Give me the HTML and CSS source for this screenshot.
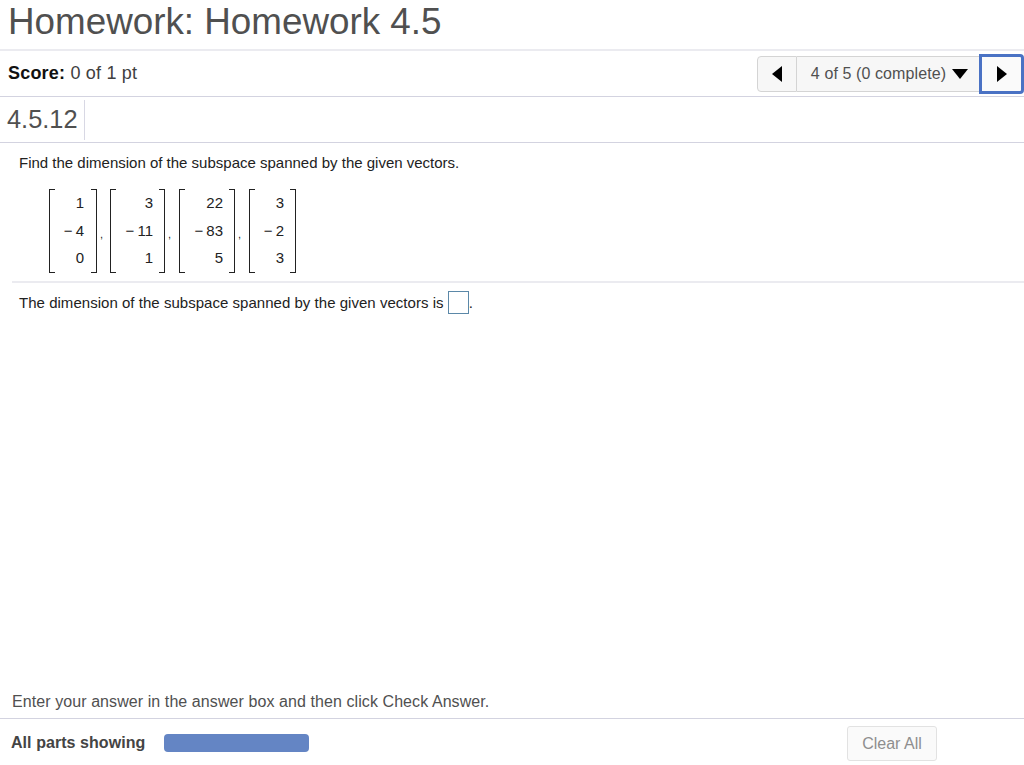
FILE: index.html
```html
<!DOCTYPE html>
<html lang="en">
<head>
    <meta charset="UTF-8">
    <meta name="viewport" content="width=device-width, initial-scale=1.0">
    <title>Homework: Homework 4.5</title>
    <link rel="stylesheet" href="styles.css">
</head>
<body>
    <div class="page">
        <h1 class="title">Homework: Homework 4.5</h1>

        <div class="score-bar">
            <div class="score"><b>Score:</b> 0 of 1 pt</div>
            <div class="nav">
                <button class="nav-prev"><span class="arrow-left"></span></button>
                <button class="nav-select">4 of 5 (0 complete)<span class="arrow-down"></span></button>
                <button class="nav-next"><span class="arrow-right"></span></button>
            </div>
        </div>

        <div class="question-bar">
            <div class="question-number">4.5.12</div>
        </div>

        <div class="question">
            <p class="prompt">Find the dimension of the subspace spanned by the given vectors.</p>
            <div class="vectors">
                <div class="vector v1"><span>1</span><span>&minus; 4</span><span>0</span></div>
                <span class="comma">,</span>
                <div class="vector v2"><span>3</span><span>&minus; 11</span><span>1</span></div>
                <span class="comma">,</span>
                <div class="vector v3"><span>22</span><span>&minus; 83</span><span>5</span></div>
                <span class="comma">,</span>
                <div class="vector v4"><span>3</span><span>&minus; 2</span><span>3</span></div>
            </div>
            <div class="answer-row">
                <p class="answer">The dimension of the subspace spanned by the given vectors is <span class="answer-box"></span>.</p>
            </div>
        </div>

        <div class="instructions">Enter your answer in the answer box and then click Check Answer.</div>

        <div class="footer">
            <b class="parts-label">All parts showing</b>
            <div class="progress"></div>
            <button class="clear-all">Clear All</button>
        </div>
    </div>
</body>
</html>
```

FILE: styles.css
```css
body {
    margin: 0;
    font-family: "Liberation Sans", Arial, sans-serif;
    background-color: #fff;
}

.page {
    display: flex;
    flex-direction: column;
    height: 765px;
    overflow: hidden;
}

.title {
    margin: 0;
    padding-left: 8px;
    height: 49px;
    line-height: 43px;
    font-size: 36.8px;
    font-weight: normal;
    color: #505050;
    border-bottom: 2px solid #ebebf0;
}

.score-bar {
    display: flex;
    justify-content: space-between;
    align-items: center;
    height: 45px;
    padding-left: 8px;
    border-bottom: 1px solid #d3d3e0;
}

.score {
    font-size: 18px;
    letter-spacing: 0.2px;
    color: #404040;
}

.score b {
    color: #111;
}

.nav {
    display: flex;
    align-items: center;
}

.nav button {
    display: flex;
    align-items: center;
    justify-content: center;
    height: 36px;
    padding: 0;
    background-color: #f7f7f7;
    border: 1px solid #d4d4d4;
    font-family: inherit;
}

.nav-prev {
    width: 40px;
    border-radius: 4px 0 0 4px;
}

.nav .nav-select {
    width: 182px;
    padding-left: 3px;
    border-left: none;
    border-right: none;
    font-size: 16px;
    letter-spacing: 0.1px;
    color: #505050;
}

.nav .nav-next {
    width: 45px;
    height: 40px;
    background-color: #fafafa;
    border: 3px solid #4a72c4;
    border-radius: 0 4px 4px 0;
}

.arrow-left {
    border-top: 8px solid transparent;
    border-bottom: 8px solid transparent;
    border-right: 10px solid #000;
}

.arrow-right {
    border-top: 8px solid transparent;
    border-bottom: 8px solid transparent;
    border-left: 10px solid #000;
}

.arrow-down {
    margin-left: 6px;
    border-left: 8px solid transparent;
    border-right: 8px solid transparent;
    border-top: 10px solid #000;
}

.question-bar {
    display: flex;
    align-items: center;
    height: 45px;
    border-bottom: 1px solid #d3d3e0;
}

.question-number {
    height: 40px;
    width: 77px;
    padding-left: 7px;
    line-height: 38px;
    font-size: 25.4px;
    color: #505050;
    border-right: 1px solid #d8d8e4;
}

.question {
    flex: 1;
    padding: 0 0 0 12px;
    font-size: 15px;
    color: #222;
}

.prompt {
    margin: 11px 0 0 7px;
    line-height: 18px;
}

.vectors {
    display: flex;
    align-items: center;
    margin: 17px 0 0 37px;
    height: 84px;
}

.vector {
    display: flex;
    flex-direction: column;
    box-sizing: border-box;
    height: 84px;
    padding: 0 12px 0 0;
    text-align: right;
    line-height: 27.5px;
    word-spacing: -1px;
    position: relative;
}

.vector::before,
.vector::after {
    content: "";
    position: absolute;
    top: 0;
    bottom: 0;
    width: 5px;
    border: 1px solid #222;
}

.vector::before {
    left: 0;
    border-right: none;
}

.vector::after {
    right: 0;
    border-left: none;
}

.v1 {
    width: 48px;
    padding-right: 13px;
}

.v2 {
    width: 55px;
}

.v3 {
    width: 56px;
}

.v4 {
    width: 47px;
}

.comma {
    box-sizing: border-box;
    width: 13px;
    padding: 6px 0 0 3px;
    font-size: 11px;
}

.comma + .vector + .comma,
.comma + .vector + .comma + .vector + .comma {
    width: 14px;
}

.answer-row {
    margin-top: 8px;
    padding: 7px 0 0 7px;
    border-top: 2px solid #ebebf0;
}

.answer {
    display: flex;
    align-items: center;
    margin: 0;
    height: 24px;
    letter-spacing: 0.03px;
    white-space: pre;
}

.answer-box {
    box-sizing: border-box;
    width: 21px;
    height: 23px;
    border: 1px solid #5b88a8;
    background-color: #fff;
}

.instructions {
    height: 33px;
    padding-left: 12px;
    line-height: 33px;
    font-size: 16px;
    letter-spacing: 0.08px;
    color: #505050;
    border-bottom: 1px solid #d3d3e0;
}

.footer {
    display: flex;
    align-items: center;
    height: 44px;
    padding: 2px 0 0 11px;
}

.parts-label {
    width: 153px;
    font-size: 16px;
    letter-spacing: 0.06px;
    color: #444;
}

.progress {
    width: 145px;
    height: 18px;
    background-color: #6485c4;
    border-radius: 4px;
}

.clear-all {
    width: 90px;
    height: 35px;
    margin-left: 538px;
    padding: 1px 0 0;
    background-color: #fafafa;
    border: 1px solid #e2e2e2;
    border-radius: 3px;
    font-family: inherit;
    font-size: 16px;
    color: #8e8e8e;
}
```
